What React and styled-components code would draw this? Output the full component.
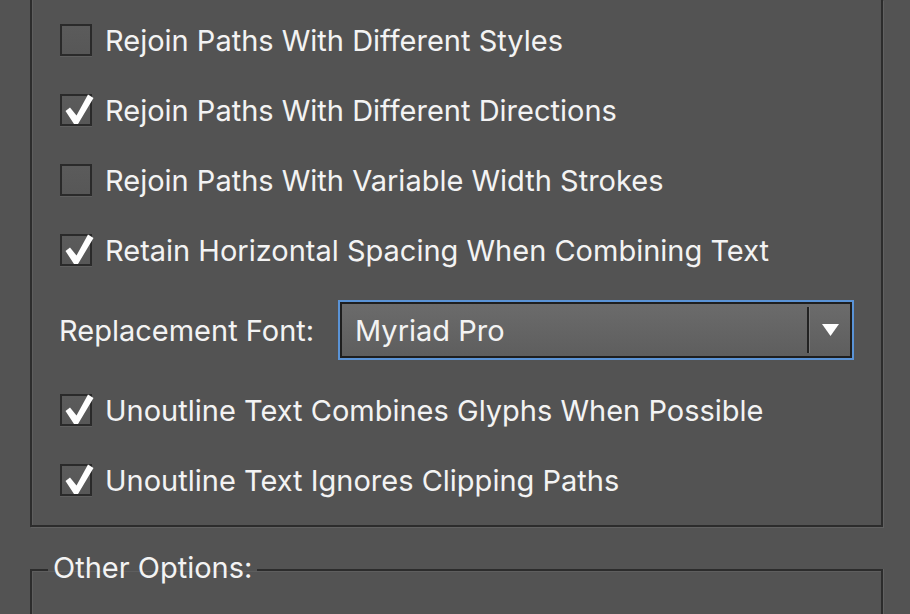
import React from "react";
import styled, { createGlobalStyle } from "styled-components";

const Global = createGlobalStyle`
  html, body { margin: 0; padding: 0; background: #535353; }
  body { width: 910px; height: 614px; overflow: hidden; font-family: Inter, "Liberation Sans", sans-serif; }
  * { box-sizing: border-box; }
`;

const Page = styled.div`
  width: 910px;
  height: 614px;
  overflow: hidden;
  background: #535353;
  padding: 0 27px 0 30px;
  color: #f3f3f3;
  font-size: 29px;
`;

const Panel = styled.div`
  width: 853px;
  border: 2px solid #2c2c2c;
  border-top: none;
  box-shadow: inset 1px 0 0 #5e5e5e, 1px 1px 0 #616161;
  padding: 5px 27px 10px 28px;
  display: flex;
  flex-direction: column;
`;

const Row = styled.label`
  height: 70px;
  display: flex;
  align-items: center;
  gap: 13px;
`;

const Box = styled.span`
  position: relative;
  width: 32px;
  height: 32px;
  flex: none;
  border: 2px solid #2a2a2a;
  background: linear-gradient(#5b5b5b, #575757);
  box-shadow: 0 1px 0 #5f5f5f;
`;

const Mark = styled.svg`
  position: absolute;
  left: -2px;
  top: -2px;
  overflow: visible;
`;

const Text = styled.span`
  white-space: nowrap;
`;

const FontRow = styled.div`
  height: 90px;
  display: flex;
  align-items: center;
  margin-left: -1px;
`;

const Label = styled.span`
  width: 279px;
  flex: none;
  white-space: nowrap;
`;

const Select = styled.div`
  flex: 1;
  height: 60px;
  border: 2px solid #5a93d6;
  display: flex;
`;

const SelectInner = styled.div`
  flex: 1;
  border: 2px solid #1e1e1e;
  background: linear-gradient(#6b6b6b, #5e5e5e);
  display: flex;
  align-items: center;
  padding-left: 13px;
`;

const Value = styled.span`
  flex: 1;
  white-space: nowrap;
`;

const Divider = styled.span`
  width: 3px;
  height: 46px;
  border-left: 2px solid #222;
  border-right: 1px solid #7a7a7a;
`;

const Arrow = styled.span`
  width: 40px;
  display: flex;
  justify-content: center;
  align-items: center;
`;

const Group = styled.fieldset`
  margin: 26px 0 0 0;
  width: 853px;
  height: 200px;
  border: 2px solid #2c2c2c;
  box-shadow: inset 1px 1px 0 #5e5e5e, 1px 0 0 #616161;
  padding: 0 16px;
`;

const Legend = styled.legend`
  padding: 0 5px;
  line-height: 34px;
  font-size: 29px;
  color: #f3f3f3;
  position: relative;
  top: -2px;
`;

const Check = ({ checked }) => (
  <Box>
    {checked && (
      <Mark width="32" height="32" viewBox="0 0 32 32">
        <path
          d="M5.5 17 L10 13.5 L16.5 21.5 L28 0.5 L33.5 4 L18 30 L14 30 Z"
          fill="#ffffff"
        />
      </Mark>
    )}
  </Box>
);

const items = [
  { t: "Rejoin Paths With Different Styles", c: false },
  { t: "Rejoin Paths With Different Directions", c: true },
  { t: "Rejoin Paths With Variable Width Strokes", c: false },
  { t: "Retain Horizontal Spacing When Combining Text", c: true },
];

const items2 = [
  { t: "Unoutline Text Combines Glyphs When Possible", c: true },
  { t: "Unoutline Text Ignores Clipping Paths", c: true },
];

export default function App() {
  return (
    <>
      <Global />
      <Page>
        <Panel>
          {items.map((i) => (
            <Row key={i.t}>
              <Check checked={i.c} />
              <Text>{i.t}</Text>
            </Row>
          ))}
          <FontRow>
            <Label>Replacement Font:</Label>
            <Select>
              <SelectInner>
                <Value>Myriad Pro</Value>
                <Divider />
                <Arrow>
                  <svg width="17" height="12" viewBox="0 0 17 12">
                    <path d="M0 0 H17 L8.5 12 Z" fill="#ffffff" />
                  </svg>
                </Arrow>
              </SelectInner>
            </Select>
          </FontRow>
          {items2.map((i) => (
            <Row key={i.t}>
              <Check checked={i.c} />
              <Text>{i.t}</Text>
            </Row>
          ))}
        </Panel>
        <Group>
          <Legend>Other Options:</Legend>
        </Group>
      </Page>
    </>
  );
}
